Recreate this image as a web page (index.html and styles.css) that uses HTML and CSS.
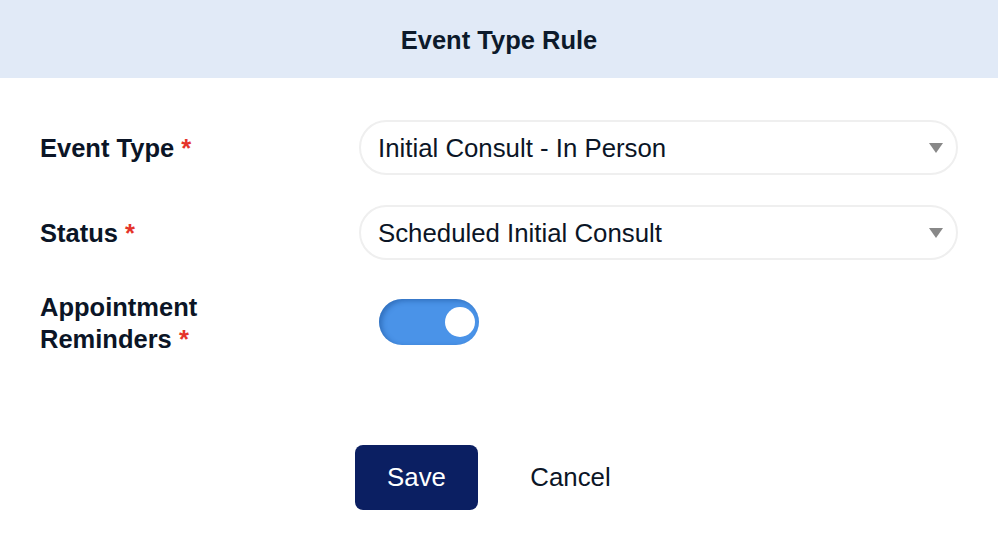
FILE: index.html
```html
<!DOCTYPE html>
<html>
<head>
<meta charset="utf-8">
<link rel="stylesheet" href="styles.css">
</head>
<body>
<div class="modal">
  <header class="head"><h1 class="title">Event Type Rule</h1></header>
  <form class="form">
    <div class="row">
      <label class="label">Event Type <span class="req">*</span></label>
      <div class="select">
        <span class="value">Initial Consult - In Person</span>
        <span class="caret"></span>
      </div>
    </div>
    <div class="row">
      <label class="label">Status <span class="req">*</span></label>
      <div class="select">
        <span class="value">Scheduled Initial Consult</span>
        <span class="caret"></span>
      </div>
    </div>
    <div class="row row-top">
      <label class="label label-wrap">
        <span class="line">Appointment</span>
        <span class="line">Reminders <span class="req">*</span></span>
      </label>
      <div class="toggle-cell">
        <span class="toggle"><span class="knob"></span></span>
      </div>
    </div>
    <div class="actions">
      <button type="button" class="btn btn-save">Save</button>
      <button type="button" class="btn btn-cancel">Cancel</button>
    </div>
  </form>
</div>
</body>
</html>
```
FILE: styles.css
```css
* { box-sizing: border-box; }
html, body { margin: 0; padding: 0; background: #fff; }
body { font-family: "Liberation Sans", Arial, Helvetica, sans-serif; color: #0b1526; }

.head {
  height: 78px;
  background: #e1eaf7;
  display: flex;
  align-items: center;
  justify-content: center;
}
.title {
  margin: 0;
  font-size: 25.5px;
  font-weight: 700;
  color: #0d1a2b;
  padding-top: 2px;
}

.form {
  padding: 42px 40px 0 40px;
  display: flex;
  flex-direction: column;
}
.row {
  display: flex;
  align-items: center;
  margin-bottom: 30px;
}
.row-top {
  align-items: flex-start;
  margin-top: 0;
}
.label {
  width: 319px;
  flex: none;
  font-size: 25.5px;
  font-weight: 700;
  color: #0b1526;
  line-height: 32px;
}
.label-wrap {
  width: 200px;
  margin-right: 119px;
  margin-top: 1px;
  display: flex;
  flex-direction: column;
}
.line { display: block; }
.req { color: #e5342a; }

.select {
  flex: 1;
  height: 55px;
  border: 2px solid #efefef;
  border-radius: 28px;
  display: flex;
  align-items: center;
  padding: 0 13px 0 17px;
}
.value {
  flex: 1;
  font-size: 25.8px;
  color: #0b1526;
  padding-top: 2px;
}
.caret {
  width: 0;
  height: 0;
  border-left: 7.5px solid transparent;
  border-right: 7.5px solid transparent;
  border-top: 10px solid #888;
}

.toggle-cell { padding-left: 20px; padding-top: 9px; }
.toggle {
  display: flex;
  align-items: center;
  justify-content: flex-end;
  width: 100px;
  height: 46px;
  border-radius: 23px;
  background: #4a93e8;
  box-shadow: inset 3px 2px 5px rgba(20, 70, 140, 0.45);
  padding-right: 4px;
}
.knob {
  width: 30px;
  height: 30px;
  border-radius: 50%;
  background: #fff;
}

.actions {
  display: flex;
  align-items: center;
  gap: 31px;
  padding-left: 315px;
  margin-top: 60px;
}
.btn {
  font-family: "Liberation Sans", Arial, Helvetica, sans-serif;
  font-size: 25.8px;
  border: 0;
  cursor: pointer;
  height: 65px;
  width: 123px;
  border-radius: 8px;
  padding: 0;
}
.btn-save { background: #0b1f62; color: #fff; }
.btn-cancel { background: transparent; color: #0b1526; }
```
